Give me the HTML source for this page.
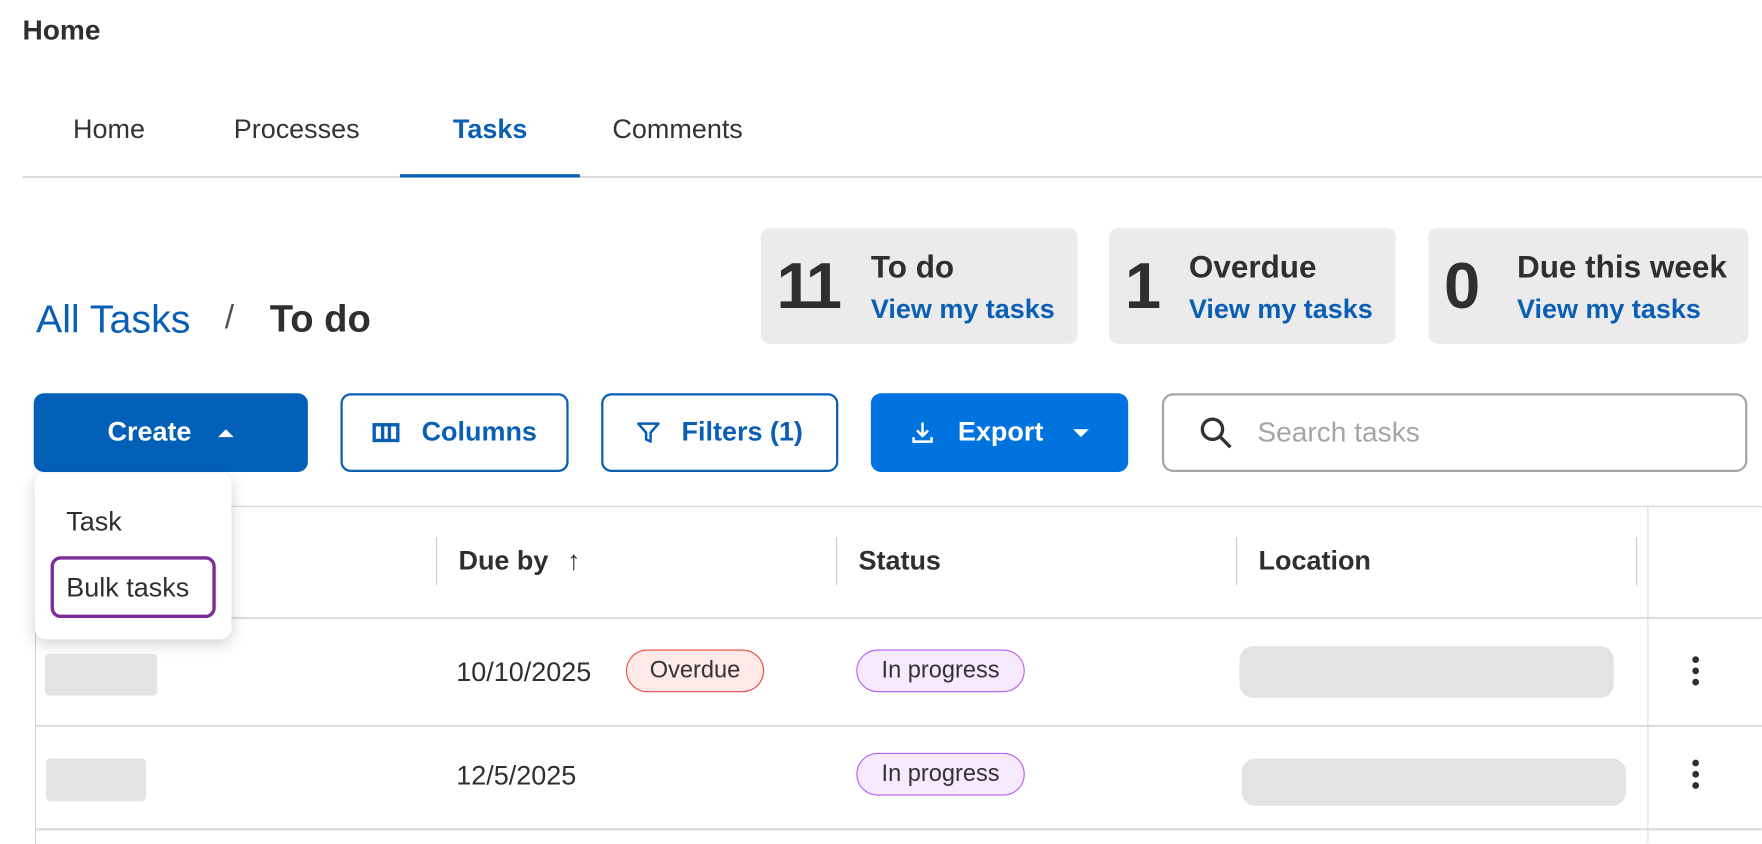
<!DOCTYPE html>
<html><head><style>
html,body{margin:0;padding:0;background:#fff;overflow:hidden}
body{width:1762px;height:834px}
#w{position:absolute;left:0;top:0;width:1568px;height:743px;transform:scale(1.1237);transform-origin:0 0;font-family:"Liberation Sans",sans-serif;color:#2f2f2f}
.a{position:absolute}
.tab{position:absolute;top:102px;font-size:24px;color:#333}
.card{position:absolute;top:203px;height:103px;background:#ebebeb;border-radius:8px}
.num{position:absolute;left:14px;top:18px;font-size:58px;font-weight:bold;color:#2f2f2f;letter-spacing:-3px}
.lab{position:absolute;top:19px;font-size:28px;font-weight:bold;color:#2f2f2f;white-space:nowrap}
.lnk{position:absolute;top:59px;font-size:24px;font-weight:bold;color:#0a5fb4;white-space:nowrap}
.btn{position:absolute;top:350px;height:70px;border-radius:9px;box-sizing:border-box;font-size:24px;font-weight:bold;display:flex;align-items:center;justify-content:center}
.ob{border:2px solid #0a5fb4;color:#0a5fb4;background:#fff}
.th{position:absolute;top:486px;font-size:24px;font-weight:bold;color:#2f2f2f}
.dv{position:absolute;top:478px;width:1px;height:43px;background:#ccc}
.pill{position:absolute;height:38px;border-radius:20px;box-sizing:border-box;font-size:21px;display:flex;align-items:center;justify-content:center}
.ip{background:#f7eafe;border:1.5px solid #b55ef0;color:#333;width:150px;left:762px}
.g{position:absolute;background:#e3e3e3;border-radius:4px}
.keb{position:absolute;left:1506px;width:6px}
.keb i{display:block;width:6px;height:6px;border-radius:3px;background:#2f2f2f;margin-bottom:4px}
</style></head><body><div id="w">
<div class="a" style="left:20px;top:13px;font-size:25px;font-weight:bold">Home</div>
<div class="tab" style="left:65px">Home</div>
<div class="tab" style="left:208px">Processes</div>
<div class="tab" style="left:403px;color:#0a5fb4;font-weight:bold">Tasks</div>
<div class="tab" style="left:545px">Comments</div>
<div class="a" style="left:20px;top:157px;width:1548px;height:1px;background:#bbb"></div>
<div class="a" style="left:356px;top:155px;width:160px;height:3px;background:#0a5fb4"></div>

<div class="a" style="left:32px;top:265px;font-size:35px;color:#0a5fb4">All Tasks</div>
<div class="a" style="left:200px;top:266px;font-size:30px;color:#555">/</div>
<div class="a" style="left:240px;top:265px;font-size:34px;font-weight:bold">To do</div>

<div class="card" style="left:677px;width:282px"><div class="num">11</div><div class="lab" style="left:98px">To do</div><div class="lnk" style="left:98px">View my tasks</div></div>
<div class="card" style="left:987px;width:255px"><div class="num">1</div><div class="lab" style="left:71px">Overdue</div><div class="lnk" style="left:71px">View my tasks</div></div>
<div class="card" style="left:1271px;width:285px"><div class="num">0</div><div class="lab" style="left:79px">Due this week</div><div class="lnk" style="left:79px">View my tasks</div></div>

<div class="btn" style="left:30px;width:244px;background:#0360b8;color:#fff">Create<span style="margin-left:24px;width:0;height:0;border-left:7px solid transparent;border-right:7px solid transparent;border-bottom:7px solid #fff"></span></div>
<div class="btn ob" style="left:303px;width:203px"><svg width="26" height="20" viewBox="0 0 26 20" style="margin-right:18px"><rect x="2" y="3" width="21" height="14" fill="none" stroke="#0a5fb4" stroke-width="3"/><path d="M9.5 3v14M15.5 3v14" stroke="#0a5fb4" stroke-width="3"/></svg>Columns</div>
<div class="btn ob" style="left:535px;width:211px"><svg width="22" height="22" viewBox="0 0 22 22" style="margin-right:18px"><path d="M2 3h18l-7 8v8l-4-2v-6z" fill="none" stroke="#0a5fb4" stroke-width="2.2" stroke-linejoin="round"/></svg>Filters (1)</div>
<div class="btn" style="left:775px;width:229px;background:#0073de;color:#fff"><svg width="22" height="22" viewBox="0 0 22 22" style="margin-right:20px"><path d="M11 2v12M6 9l5 5 5-5M3 15v4h16v-4" fill="none" stroke="#fff" stroke-width="2.2"/></svg>Export<span style="margin-left:26px;width:0;height:0;border-left:7px solid transparent;border-right:7px solid transparent;border-top:7px solid #fff"></span></div>
<div class="a" style="left:1034px;top:350px;width:521px;height:70px;border:2px solid #a5a5a5;border-radius:10px;box-sizing:border-box"></div>
<svg class="a" style="left:1066px;top:369px" width="34" height="34" viewBox="0 0 34 34"><circle cx="13" cy="13" r="9" fill="none" stroke="#333" stroke-width="3"/><path d="M20 20l9 9" stroke="#333" stroke-width="3"/></svg>
<div class="a" style="left:1119px;top:371px;font-size:25px;color:#a5a5a5">Search tasks</div>

<div class="a" style="left:31px;top:450px;width:1540px;height:300px;border:1px solid #ccc;border-bottom:none;border-radius:8px 8px 0 0"></div>
<div class="a" style="left:31px;top:549px;width:1537px;height:2px;background:#ddd"></div>
<div class="a" style="left:31px;top:645px;width:1537px;height:2px;background:#ddd"></div>
<div class="a" style="left:31px;top:737px;width:1537px;height:2px;background:#ddd"></div>
<div class="a" style="left:1466px;top:450px;width:1px;height:300px;background:#ddd"></div>
<div class="dv" style="left:388px"></div><div class="dv" style="left:744px"></div><div class="dv" style="left:1100px"></div><div class="dv" style="left:1456px"></div>
<div class="th" style="left:408px">Due by <span style="font-weight:normal;margin-left:10px">↑</span></div>
<div class="th" style="left:764px">Status</div>
<div class="th" style="left:1120px">Location</div>

<div class="g" style="left:40px;top:582px;width:100px;height:37px"></div>
<div class="a" style="left:406px;top:585px;font-size:24px">10/10/2025</div>
<div class="pill" style="left:557px;top:578px;width:123px;background:#fde9e8;border:1.5px solid #ea4a43;color:#333">Overdue</div>
<div class="pill ip" style="top:578px">In progress</div>
<div class="g" style="left:1103px;top:575px;width:333px;height:46px;border-radius:12px"></div>
<div class="keb" style="top:584px"><i></i><i></i><i></i></div>

<div class="g" style="left:41px;top:675px;width:89px;height:38px"></div>
<div class="a" style="left:406px;top:677px;font-size:24px">12/5/2025</div>
<div class="pill ip" style="top:670px">In progress</div>
<div class="g" style="left:1105px;top:675px;width:342px;height:42px;border-radius:12px"></div>
<div class="keb" style="top:676px"><i></i><i></i><i></i></div>

<div class="a" style="left:31px;top:421px;width:175px;height:148px;background:#fff;border-radius:10px;box-shadow:0 4px 14px rgba(0,0,0,0.18)"></div>
<div class="a" style="left:59px;top:451px;font-size:24px">Task</div>
<div class="a" style="left:45px;top:495px;width:147px;height:55px;border:3px solid #7b2f96;border-radius:9px;box-sizing:border-box"></div>
<div class="a" style="left:59px;top:510px;font-size:24px">Bulk tasks</div>
</div></body></html>
